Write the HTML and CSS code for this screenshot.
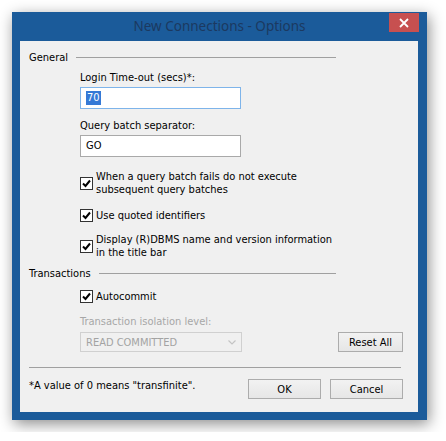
FILE: index.html
```html
<!DOCTYPE html>
<html lang="en">
<head>
    <meta charset="UTF-8">
    <title>New Connections - Options</title>
    <link rel="stylesheet" href="styles.css">
</head>
<body>
    <div class="window">
        <div class="titlebar">
            <span class="title">New Connections - Options</span>
            <span class="close">
                <svg width="10" height="10" viewBox="0 0 10 10"><path d="M1 1 L9 9 M9 1 L1 9" stroke="#fff" stroke-width="1.8"/></svg>
            </span>
        </div>
        <div class="client">
            <div class="group"><span>General</span><span class="rule"></span></div>
            <div class="indent">
                <div class="label">Login Time-out (secs)*:</div>
                <div class="input focused"><span class="sel">70</span></div>
                <div class="label query">Query batch separator:</div>
                <div class="input">GO</div>

                <div class="check first">
                    <span class="box"><svg width="11" height="11" viewBox="0 0 11 11"><path d="M2 5.5 L4.5 8 L9 2.5" fill="none" stroke="#000" stroke-width="2"/></svg></span>
                    <span class="text">When a query batch fails do not execute<br>subsequent query batches</span>
                </div>
                <div class="check single">
                    <span class="box"><svg width="11" height="11" viewBox="0 0 11 11"><path d="M2 5.5 L4.5 8 L9 2.5" fill="none" stroke="#000" stroke-width="2"/></svg></span>
                    <span class="text">Use quoted identifiers</span>
                </div>
                <div class="check third">
                    <span class="box"><svg width="11" height="11" viewBox="0 0 11 11"><path d="M2 5.5 L4.5 8 L9 2.5" fill="none" stroke="#000" stroke-width="2"/></svg></span>
                    <span class="text">Display (R)DBMS name and version information<br>in the title bar</span>
                </div>
            </div>

            <div class="group second"><span>Transactions</span><span class="rule"></span></div>
            <div class="indent">
                <div class="check auto">
                    <span class="box"><svg width="11" height="11" viewBox="0 0 11 11"><path d="M2 5.5 L4.5 8 L9 2.5" fill="none" stroke="#000" stroke-width="2"/></svg></span>
                    <span class="text">Autocommit</span>
                </div>
                <div class="label disabled">Transaction isolation level:</div>
            </div>
            <div class="select-row">
                <div class="select">
                    <span>READ COMMITTED</span>
                    <svg width="8" height="5" viewBox="0 0 8 5"><path d="M0.5 0.5 L4 4 L7.5 0.5" fill="none" stroke="#c4c4c4" stroke-width="1.2"/></svg>
                </div>
                <button class="btn reset">Reset All</button>
            </div>

            <div class="separator"></div>
            <div class="footer">
                <span class="note">*A value of 0 means "transfinite".</span>
                <button class="btn">OK</button>
                <button class="btn">Cancel</button>
            </div>
        </div>
    </div>
</body>
</html>
```

FILE: styles.css
```css
body {
    margin: 0;
    padding: 12px;
    background: #fff;
    font-family: "DejaVu Sans Condensed", "DejaVu Sans", sans-serif;
    font-size: 11px;
    color: #000;
}
.window {
    width: 415px;
    height: 408px;
    background: #1b5b9a;
    box-shadow: 2px 4px 14px rgba(0, 0, 0, 0.45);
    display: flex;
    flex-direction: column;
}
.titlebar {
    height: 29px;
    display: flex;
    align-items: flex-start;
    padding: 0 8px 0 38px;
}
.title {
    flex: 1;
    text-align: center;
    font-family: "Noto Sans", sans-serif;
    font-size: 13.5px;
    line-height: 29px;
    color: #1c3960;
}
.close {
    width: 30px;
    height: 19px;
    margin-top: 1px;
    background: #c75050;
    display: flex;
    align-items: center;
    justify-content: center;
}
.client {
    flex: 1;
    margin: 0 9px 8px 8px;
    background: #f0f0f0;
    padding: 10px 15px 0 9px;
}
.group {
    display: flex;
    align-items: center;
    line-height: 13px;
    width: 307px;
}
.group .rule {
    flex: 1;
    height: 1px;
    background: #a0a0a0;
    margin-left: 8px;
}
.group.second {
    margin-top: 8px;
}
.indent {
    padding-left: 51px;
}
.label {
    line-height: 13px;
    margin-top: 7px;
}
.label.query {
    margin-top: 10px;
}
.label.disabled {
    color: #a7a7a7;
    margin-top: 12px;
}
.input {
    height: 20px;
    margin-top: 3px;
    background: #fff;
    border: 1px solid #a9a9a9;
    line-height: 20px;
    padding-left: 5px;
    width: 154px;
}
.input.focused {
    border-color: #7eb4ea;
    margin-bottom: 4px;
}
.sel {
    background: #3579d6;
    color: #fff;
    display: inline-block;
    line-height: 14px;
    padding: 0 1px;
}
.check {
    display: flex;
    align-items: center;
}
.check.first {
    margin-top: 13px;
}
.check.single {
    margin-top: 13px;
}
.check.third {
    margin-top: 11px;
}
.check.auto {
    margin-top: 10px;
}
.box {
    width: 11px;
    height: 11px;
    border: 1px solid #333;
    background: #fff;
    display: flex;
    margin-right: 3px;
    flex: none;
}
.check .text {
    line-height: 13px;
}
.select-row {
    display: flex;
    justify-content: space-between;
    align-items: center;
    margin-top: 4px;
    padding-left: 51px;
}
.select {
    width: 150px;
    height: 18px;
    border: 1px solid #d0d0d0;
    display: flex;
    align-items: center;
    justify-content: space-between;
    padding: 0 5px;
    color: #a3a3a3;
}
.btn {
    height: 20px;
    border: 1px solid #acacac;
    background: linear-gradient(#f2f2f2, #e6e6e6);
    font-family: inherit;
    font-size: 11px;
    color: #000;
    padding: 0;
}
.reset {
    width: 65px;
}
.separator {
    height: 1px;
    background: #a0a0a0;
    margin-top: 15px;
    width: 372px;
}
.footer {
    display: flex;
    align-items: center;
    margin-top: 11px;
}
.note {
    flex: 1;
    margin-top: -7px;
}
.footer .btn {
    width: 73px;
    margin-left: 9px;
}
```
